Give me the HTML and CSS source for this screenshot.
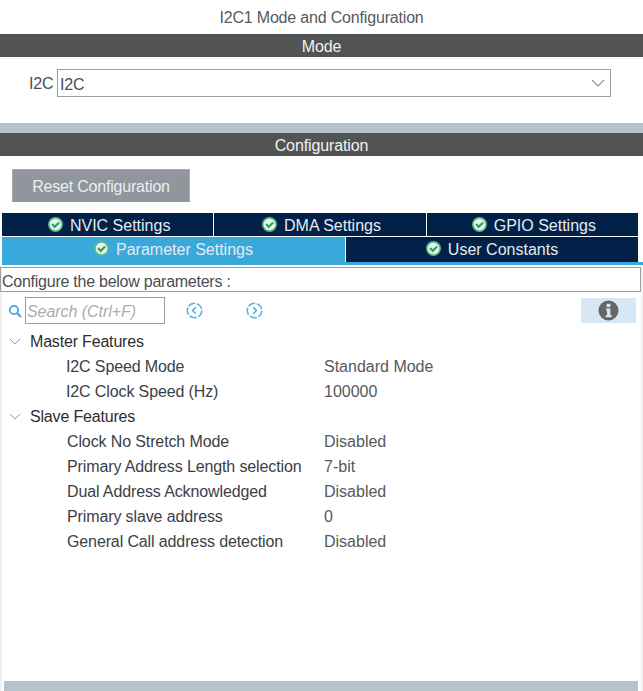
FILE: index.html
```html
<!DOCTYPE html>
<html lang="en">
<head>
<meta charset="utf-8">
<title>I2C1 Mode and Configuration</title>
<link rel="stylesheet" href="styles.css">
</head>
<body>
<svg class="defs" width="0" height="0" aria-hidden="true">
  <symbol id="ok" viewBox="0 0 14 14">
    <circle cx="7" cy="7" r="7" fill="#5fb98a"/>
    <circle cx="7" cy="7" r="5.4" fill="#e6f4ec"/>
    <path d="M3.8 6.6 6.2 9.2 10.4 5.2" fill="none" stroke="#2f9e6a" stroke-width="2"/>
  </symbol>
  <symbol id="chev" viewBox="0 0 14 8">
    <path d="M1 1 7 7 13 1" fill="none" stroke="#8a9096" stroke-width="1.1"/>
  </symbol>
</svg>
<header class="title">I2C1 Mode and Configuration</header>
<h2 class="bar">Mode</h2>
<div class="mode-row">
  <label class="mode-label">I2C</label>
  <div class="select"><span>I2C</span><svg class="select-chev"><use href="#chev"/></svg></div>
</div>
<div class="divider"></div>
<h2 class="bar">Configuration</h2>
<div class="btn-row"><button class="reset">Reset Configuration</button></div>
<div class="tabs">
  <div class="tab-row three">
    <div class="tab"><svg class="ok"><use href="#ok"/></svg>NVIC Settings</div>
    <div class="tab"><svg class="ok"><use href="#ok"/></svg>DMA Settings</div>
    <div class="tab"><svg class="ok"><use href="#ok"/></svg>GPIO Settings</div>
  </div>
  <div class="tab-row two">
    <div class="tab active"><svg class="ok"><use href="#ok"/></svg>Parameter Settings</div>
    <div class="tab"><svg class="ok"><use href="#ok"/></svg>User Constants</div>
  </div>
</div>
<div class="underline"></div>
<main class="panel">
  <div class="hint">Configure the below parameters :</div>
  <div class="toolbar">
    <svg class="search-icon" viewBox="0 0 14 14"><circle cx="6" cy="6" r="4.2" fill="none" stroke="#3fa9dc" stroke-width="1.8"/><path d="M9 9 13 13" stroke="#3fa9dc" stroke-width="2.2"/></svg>
    <div class="search">Search (Ctrl+F)</div>
    <svg class="nav prev" viewBox="0 0 16 16"><circle cx="8" cy="8" r="6.8" fill="none" stroke="#5ab6e4" stroke-width="1.5" stroke-dasharray="7 1.5"/><path d="M9.2 5 6.2 8 9.2 11" fill="none" stroke="#3fa9dc" stroke-width="1.3"/></svg>
    <svg class="nav next" viewBox="0 0 16 16"><circle cx="8" cy="8" r="6.8" fill="none" stroke="#5ab6e4" stroke-width="1.5" stroke-dasharray="7 1.5"/><path d="M6.8 5 9.8 8 6.8 11" fill="none" stroke="#3fa9dc" stroke-width="1.3"/></svg>
    <div class="info"><svg viewBox="0 0 22 22"><circle cx="11" cy="11" r="10.5" fill="#666"/><rect x="9" y="4" width="4" height="3.4" fill="#d8e7f5"/><path d="M8.5 9H13V16H14.5V18H8V16H9.5V11H8.5Z" fill="#d8e7f5"/></svg></div>
  </div>
  <div class="tree">
    <div class="group"><svg class="tree-chev"><use href="#chev"/></svg>Master Features</div>
    <div class="param m"><span class="name">I2C Speed Mode</span><span class="val">Standard Mode</span></div>
    <div class="param m"><span class="name">I2C Clock Speed (Hz)</span><span class="val">100000</span></div>
    <div class="group"><svg class="tree-chev"><use href="#chev"/></svg>Slave Features</div>
    <div class="param"><span class="name">Clock No Stretch Mode</span><span class="val">Disabled</span></div>
    <div class="param"><span class="name">Primary Address Length selection</span><span class="val">7-bit</span></div>
    <div class="param"><span class="name">Dual Address Acknowledged</span><span class="val">Disabled</span></div>
    <div class="param"><span class="name">Primary slave address</span><span class="val">0</span></div>
    <div class="param"><span class="name">General Call address detection</span><span class="val">Disabled</span></div>
  </div>
  <div class="scrollbar"></div>
</main>
</body>
</html>
```
FILE: styles.css
```css
* { box-sizing: border-box; }
html, body { margin: 0; height: 691px; overflow: hidden; }
body { width: 643px; background: #fff; font: 16px "Liberation Sans", Arial, sans-serif; letter-spacing: -0.12px; color: #3c4046; display: flex; flex-direction: column; }
.defs { position: absolute; }
.title { height: 34px; line-height: 36px; text-align: center; color: #555a5e; letter-spacing: -0.18px; }
.bar { margin: 0; height: 23px; line-height: 26px; background: #525453; color: #f0f2f2; font-size: 16px; font-weight: 400; text-align: center; }
.mode-row { height: 66px; display: flex; align-items: flex-start; padding: 12px 32px 0 29px; }
.mode-label { width: 28px; line-height: 30px; color: #4a4e52; }
.select { flex: 1; height: 28px; border: 1px solid #989fa5; display: flex; align-items: center; justify-content: space-between; padding: 0 4px 0 2px; color: #4a4e52; }
.select span { padding-top: 4px; line-height: 22px; }
.select-chev { width: 14px; height: 8px; margin-right: 1px; }
.divider { height: 10px; background: #b7c3ca; }
.btn-row { padding: 13px 0 11px 12px; }
.reset { display: block; width: 178px; height: 33px; border: 1px solid #a5abb0; border-bottom: 0; background: #90969b; color: #eceeef; font: 16px "Liberation Sans", Arial, sans-serif; letter-spacing: -0.2px; padding: 2px 0 0; }
.tabs { margin: 0 5px 0 2px; }
.tab-row { display: flex; gap: 1px; height: 24px; }
.tab-row.two { height: 25px; }
.three .tab { flex: 1; padding-left: 3px; }
.two .tab { flex: 292; }
.two .tab.active { flex: 0 0 343px; }
.tab { background: #012148; color: #e6ebf0; display: flex; align-items: center; justify-content: center; gap: 7px; height: 23px; line-height: 23px; padding-top: 1px; letter-spacing: 0; }
.two .tab { height: 25px; padding-top: 0; }
.tab.active { background: #39a9dc; }
.ok { width: 15px; height: 15px; flex: none; margin-top: -2px; }
.underline { height: 3px; margin-left: 2px; background: #39a9dc; }
.panel { flex: 1; display: flex; flex-direction: column; border-left: 2px solid #f1f1f1; border-right: 2px solid #f1f1f1; min-height: 0; }
.hint { margin: 2px 0 0 -2px; height: 25px; line-height: 27px; border: 1px solid #989fa5; padding-left: 1px; color: #4a4e52; letter-spacing: -0.25px; }
.toolbar { height: 37px; display: flex; align-items: flex-start; padding-top: 5px; position: relative; }
.search-icon { width: 14px; height: 14px; margin: 7px 0 0 6px; flex: none; }
.search { width: 140px; height: 27px; margin-left: 3px; border: 1px solid #989fa5; color: #a9adb1; font-style: italic; line-height: 27px; padding-left: 1px; letter-spacing: -0.05px; }
.nav { width: 17px; height: 17px; flex: none; margin-top: 5px; }
.prev { margin-left: 21px; }
.next { margin-left: 43px; }
.info { margin-left: auto; margin-right: 5px; margin-top: 1px; width: 55px; height: 25px; background: #d8e7f5; display: flex; align-items: center; justify-content: center; }
.info svg { width: 21px; height: 21px; }
.tree { flex: 1; }
.group { height: 25px; line-height: 25px; display: flex; align-items: center; color: #2b2e32; letter-spacing: -0.18px; }
.tree-chev { width: 12px; height: 7px; margin: 0 9px 0 7px; flex: none; }
.param { height: 25px; line-height: 25px; display: flex; color: #3c4046; padding-left: 65px; }
.param.m { padding-left: 64px; }
.param.m .name { width: 258px; }
.name { width: 257px; flex: none; }
.val { color: #555a5e; letter-spacing: 0; }
.scrollbar { height: 10px; margin: 0 3px 0 2px; background: #b7c3ca; }
```
